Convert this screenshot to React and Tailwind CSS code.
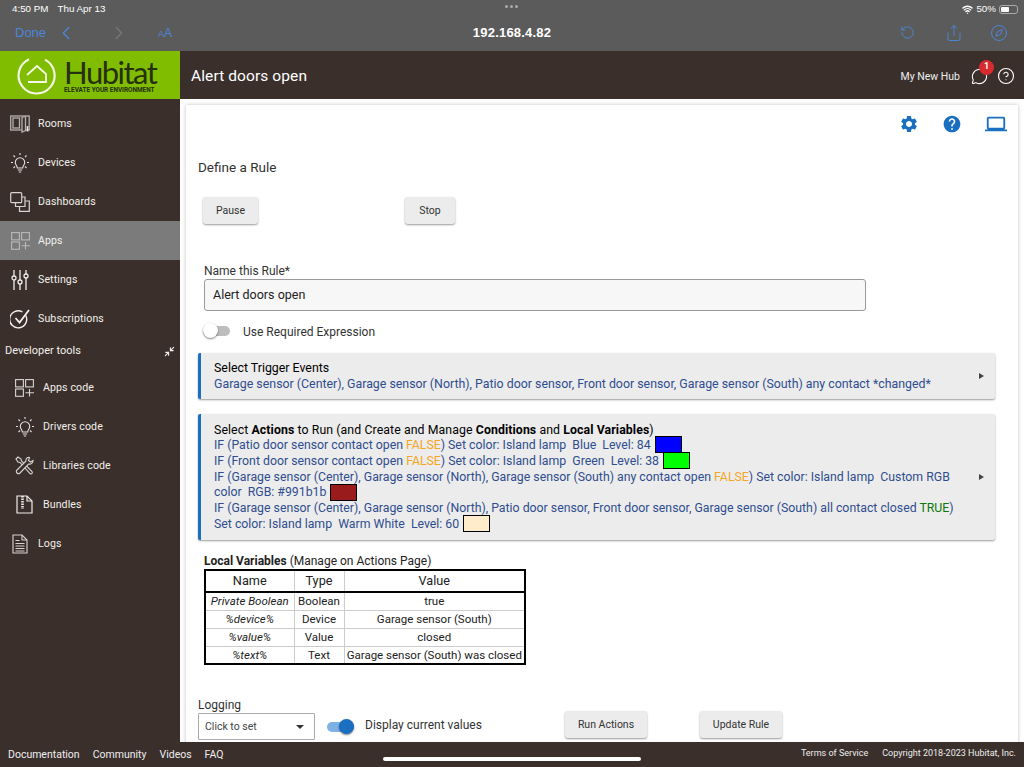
import React from 'react';
import { ChevronLeft, ChevronRight, RotateCw, Share, Compass, Wifi, MessageCircle, CircleHelp, Minimize2 } from 'lucide-react';
import { MdSettings, MdHelp, MdLaptop } from 'react-icons/md';

const font = { fontFamily: 'Roboto, sans-serif' };

// sidebar icons, drawn by hand because the packages have no close match
const RoomsIcon = () => (
  <svg width="20" height="18" viewBox="0 0 20 18" fill="none" stroke="#b5b0ac" strokeWidth="1.3">
    <rect x="0.7" y="1" width="18.500" height="14" />
    <rect x="3" y="3" width="6.500" height="10" />
    <path d="M12 2.500l3.500-1v14l-3.500 1.500z" fill="#3a2f2b" />
    <path d="M17.500 11v5.500" strokeWidth="1.600" stroke="#e8e4e0" />
  </svg>
);
const BulbIcon = () => (
  <svg width="18" height="20" viewBox="0 0 18 20" fill="none" stroke="#e4e0dc" strokeWidth="1.1">
    <path d="M6.3 15c0-2-2-3-2-5.500a4.700 4.700 0 0 1 9.400 0c0 2.500-2 3.500-2 5.500z" />
    <path d="M6.800 17h4.400M7.800 19h2.400" />
    <path d="M9 0v2M2.500 2.500l1.500 1.500M15.500 2.500L14 4M0 9.500h2M16 9.500h2M2.500 15l1.500-1.500M15.500 15L14 13.500" />
  </svg>
);
const DashIcon = () => (
  <svg width="20" height="20" viewBox="0 0 20 20" fill="none" stroke="#d8d4d0" strokeWidth="1.2">
    <rect x="0.7" y="0.7" width="11" height="10" rx="1" />
    <path d="M11.700 5H15v9.500H5.500V10.700" />
    <path d="M15 9h4.300v10.300H9.500V14.500" />
  </svg>
);
const AppsIcon = ({ c = '#d8d4d0' }) => (
  <svg width="19" height="18" viewBox="0 0 19 18" fill="none" stroke={c} strokeWidth="1.1">
    <rect x="0.6" y="0.6" width="7.800" height="7.300" />
    <rect x="10.600" y="0.6" width="7.800" height="7.300" />
    <rect x="0.6" y="10" width="7.800" height="7.300" />
    <path d="M14.500 10v7.500M10.500 13.700H19" />
  </svg>
);
const SlidersIcon = () => (
  <svg width="18" height="20" viewBox="0 0 18 20" fill="none" stroke="#f0ede9" strokeWidth="1.3">
    <path d="M3 0v6M3 10v10M9 0v10M9 14v6M15 0v4M15 8v12" />
    <circle cx="3" cy="8" r="2" />
    <circle cx="9" cy="12" r="2" />
    <circle cx="15" cy="6" r="2" />
  </svg>
);
const CheckIcon = () => (
  <svg width="20" height="20" viewBox="0 0 20 20" fill="none" stroke="#f4f1ee" strokeWidth="1.400">
    <path d="M15.500 6a8.500 8.500 0 1 1-3-3" />
    <path d="M5.500 9l4 4.500L19 1" strokeWidth="1.800" />
  </svg>
);
const WrenchIcon = () => (
  <svg width="19" height="19" viewBox="0 0 19 19" fill="none" stroke="#d8d4d0" strokeWidth="1.100">
    <path d="M1 3l2-2 3 2 .5 2L17 15.500c1 2-.5 3-2 2L5 6.500 3 6z" />
    <path d="M18 4.500l-2.500 1.500-2-1.500 1-3c-2-.5-4 1-3.500 3.500L2 14c-2 2 1 5 3 3l8.500-9c2.500 .5 4.500-1 4.500-3.500z" fill="#3a2f2b" />
  </svg>
);
const ZipIcon = () => (
  <svg width="17" height="19" viewBox="0 0 17 19" fill="none" stroke="#f0ede9" strokeWidth="1.200">
    <path d="M1 1h10l5 5v12H1z" />
    <path d="M6.500 1v13" strokeWidth="2.600" strokeDasharray="1.500 1" />
    <path d="M11 1v5h5" />
  </svg>
);
const LogIcon = () => (
  <svg width="16" height="20" viewBox="0 0 16 20" fill="none" stroke="#d8d4d0" strokeWidth="1.100">
    <path d="M1 1h9l5 5v13H1z" />
    <path d="M10 1v5h5M3.500 6.500h4M3.500 9.500h9M3.500 12h9M3.500 14.500h9M3.500 17h9" />
  </svg>
);

const NavRow = ({ icon, label, active, indent }) => (
  <div className={`flex items-center h-[39px] text-[10.600px] tracking-[0.1px] text-[#f2efec] ${active ? 'bg-[#7b7b7b]' : ''}`}>
    <div className={`flex justify-center shrink-0 ${indent ? 'w-[43px] pl-[6px]' : 'w-[38px] pl-[2px]'}`}>{icon}</div>
    <span>{label}</span>
  </div>
);

const Logo = () => (
  <div className="w-[180px] h-[48px] shrink-0 bg-[#80bc00] flex items-center pl-[16px] pt-[1px]">
    <svg width="41" height="39" viewBox="0 0 41 39" fill="none" stroke="#f4f7e6" strokeWidth="2.200" className="shrink-0">
      <path d="M13 3.200a18 18 0 1 0 16 .4" />
      <path d="M33 6.500a18 18 0 0 1 4 5" strokeWidth="1" />
      <path d="M11 19l10-9 9 8v8H12" strokeWidth="1.800" />
    </svg>
    <div className="ml-[7px] flex flex-col">
      <span className="text-[31px] leading-[29px] tracking-[-1.500px] text-[#26300f]" style={{ fontFamily: 'Lato, sans-serif' }}>Hubitat</span>
      <span className="text-[6.400px] leading-[7px] font-bold text-[#26300f] whitespace-nowrap" style={font}>ELEVATE YOUR ENVIRONMENT</span>
    </div>
  </div>
);

const Btn = ({ children, w }) => (
  <div className={`${w} h-[27px] flex items-center justify-center bg-[#ececec] rounded-[3px] text-[10.500px] text-[#333] shadow-[0_1px_2px_rgba(0,0,0,0.4)]`}>
    {children}
  </div>
);

const Swatch = ({ color }) => (
  <span className="inline-block align-middle w-[27px] h-[17px] border border-black ml-[1px] mt-[-2px]" style={{ background: color }} />
);

const Arrow = () => (
  <div className="w-0 h-0 border-y-[3.500px] border-y-transparent border-l-[5px] border-l-[#444] mr-[11px] shrink-0" />
);

const F = () => <span className="text-[#f5a623]">FALSE</span>;

const variables = [
  ['Private Boolean', 'Boolean', 'true'],
  ['%device%', 'Device', 'Garage sensor (South)'],
  ['%value%', 'Value', 'closed'],
  ['%text%', 'Text', 'Garage sensor (South) was closed'],
];

export default function App() {
  return (
    <div className="w-[1024px] h-[767px] overflow-hidden flex flex-col bg-[#3a2f2b]" style={font}>
      {/* browser chrome */}
      <div className="h-[51px] shrink-0 bg-[#5b5b5b] relative" style={{ fontFamily: '"Liberation Sans", sans-serif' }}>
        <div className="flex justify-between items-center h-[19px] pl-[12px] pr-[6px] text-[9.800px] text-white">
          <div className="flex gap-[9px]"><span>4:50 PM</span><span>Thu Apr 13</span></div>
          <div className="flex items-center gap-[3px]">
            <Wifi size={11} strokeWidth={3} />
            <span>50%</span>
            <div className="w-[19px] h-[9px] rounded-[3px] border border-[#aaa] p-[1px]"><div className="w-[8px] h-full rounded-[1px] bg-white" /></div>
          </div>
        </div>
        <div className="absolute left-[505px] top-[5px] flex gap-[2px]">
          <i className="w-[3px] h-[3px] rounded-full bg-[#aaa]" /><i className="w-[3px] h-[3px] rounded-full bg-[#aaa]" /><i className="w-[3px] h-[3px] rounded-full bg-[#aaa]" />
        </div>
        <div className="flex items-center h-[27px] pl-[15px] pr-[16px] text-[#4d86d6]">
          <div className="flex-1 flex items-center">
            <span className="text-[13px] w-[42px]">Done</span>
            <ChevronLeft size={22} strokeWidth={1.500} className="ml-[-2px]" />
            <ChevronRight size={22} strokeWidth={1.500} className="ml-[31px] text-[#777]" />
            <span className="ml-[28px] text-[12px] w-[22px]"><span className="text-[9px]">A</span>A</span>
          </div>
          <span className="text-white font-bold text-[13px] tracking-[0.2px] pl-[1px]">192.168.4.82</span>
          <div className="flex-1 flex items-center justify-end">
            <RotateCw size={15} strokeWidth={1.500} className="scale-x-[-1]" />
            <Share size={18} strokeWidth={1.300} className="ml-[30px]" />
            <Compass size={18} strokeWidth={1.300} className="ml-[27px]" />
          </div>
        </div>
      </div>

      {/* header */}
      <div className="h-[48px] shrink-0 flex items-center bg-[#3a2f2b] text-white">
        <Logo />
        <div className="pl-[11px] mt-[3px] text-[15.500px] tracking-[0.1px]">Alert doors open</div>
        <div className="ml-auto flex items-center pr-[9px] mt-[2px]">
          <span className="text-[10.500px] text-[#eee] mt-[1px]">My New Hub</span>
          <div className="relative ml-[11px]">
            <MessageCircle size={17} strokeWidth={1.500} />
            <span className="absolute top-[-8px] right-[-6px] w-[15px] h-[15px] rounded-full bg-[#d92b2f] text-[9px] font-bold flex items-center justify-center">1</span>
          </div>
          <CircleHelp size={18} strokeWidth={1.500} className="ml-[9px]" />
        </div>
      </div>

      <div className="flex flex-1 min-h-0">
        {/* sidebar */}
        <div className="w-[180px] shrink-0 pt-[5px]">
          <NavRow icon={<RoomsIcon />} label="Rooms" />
          <NavRow icon={<BulbIcon />} label="Devices" />
          <NavRow icon={<DashIcon />} label="Dashboards" />
          <NavRow icon={<AppsIcon c="#b9b9b9" />} label="Apps" active />
          <NavRow icon={<SlidersIcon />} label="Settings" />
          <NavRow icon={<CheckIcon />} label="Subscriptions" />
          <div className="flex items-center justify-between h-[25px] pt-[1px] pl-[5px] pr-[5px] text-[11px] text-[#f2efec]">
            <span>Developer tools</span>
            <Minimize2 size={11} strokeWidth={2.500} />
          </div>
          <div className="h-[5px]" />
          <NavRow icon={<AppsIcon />} label="Apps code" indent />
          <NavRow icon={<BulbIcon />} label="Drivers code" indent />
          <NavRow icon={<WrenchIcon />} label="Libraries code" indent />
          <NavRow icon={<ZipIcon />} label="Bundles" indent />
          <NavRow icon={<LogIcon />} label="Logs" />
        </div>

        {/* content */}
        <div className="flex-1 min-w-0 bg-white overflow-hidden pl-[6px] pr-[6px] pt-[6px]">
          <div className="h-[700px] shadow-[0_0_4px_rgba(0,0,0,0.25)] pl-[12px] pr-[23px]">
            <div className="flex justify-end items-start gap-[23px] pt-[9px] mr-[-12px] h-[46px] text-[#1a6fc0]">
              <MdSettings size={20} />
              <MdHelp size={20} />
              <MdLaptop size={22} className="mt-[-1px]" />
            </div>
            <div className="text-[13.500px] text-[#333] leading-[16px] mt-[8px]">Define a Rule</div>
            <div className="flex mt-[22px] ml-[5px]">
              <Btn w="w-[55px]">Pause</Btn>
              <div className="ml-[147px]"><Btn w="w-[50px]">Stop</Btn></div>
            </div>
            <div className="ml-[6px] mt-[39px] text-[12px] leading-[16px] text-[#333]">Name this Rule*</div>
            <div className="ml-[6px] w-[662px] h-[32px] flex items-center pl-[8px] pt-[1px] border border-[#999] rounded-[3px] bg-[#f7f7f7] text-[12.500px] text-[#222]">Alert doors open</div>
            <div className="ml-[5px] mt-[10px] flex items-center h-[20px]">
              <div className="relative w-[27px] h-[10px] rounded-full bg-[#bdbdbd]">
                <div className="absolute left-0 top-[-3px] w-[15px] h-[15px] rounded-full bg-white shadow-[0_1px_2px_rgba(0,0,0,0.5)]" />
              </div>
              <span className="ml-[13px] mt-[1px] text-[12px] text-[#333]">Use Required Expression</span>
            </div>
            <div className="mt-[12px] h-[46px] flex items-center justify-between bg-[#ececec] border-l-[3px] border-l-[#1a6fc0] rounded-[2px] shadow-[0_1px_2px_rgba(0,0,0,0.4)] pl-[13px]">
              <div className="text-[12.360px] leading-[15.700px] pt-[2px]">
                <div className="text-black">Select Trigger Events</div>
                <div className="text-[#2f4d8f]">Garage sensor (Center), Garage sensor (North), Patio door sensor, Front door sensor, Garage sensor (South) any contact *changed*</div>
              </div>
              <Arrow />
            </div>
            <div className="mt-[15px] h-[126px] flex items-center justify-between bg-[#ececec] border-l-[3px] border-l-[#1a6fc0] rounded-[2px] shadow-[0_1px_2px_rgba(0,0,0,0.4)] pl-[13px]">
              <div className="text-[12.300px] leading-[15.700px] w-[750px] pt-[1px] text-[#2f4d8f]">
                <div className="text-black tracking-[0.09px]">Select <b>Actions</b> to Run (and Create and Manage <b>Conditions</b> and <b>Local Variables</b>)</div>
                <div>IF (Patio door sensor contact open <F />) Set color: Island lamp&nbsp; Blue&nbsp; Level: 84 <Swatch color="#0000ff" /></div>
                <div>IF (Front door sensor contact open <F />) Set color: Island lamp&nbsp; Green&nbsp; Level: 38 <Swatch color="#00ff00" /></div>
                <div>IF (Garage sensor (Center), Garage sensor (North), Garage sensor (South) any contact open <F />) Set color: Island lamp&nbsp; Custom RGB color&nbsp; RGB: #991b1b <Swatch color="#991b1b" /></div>
                <div>IF (Garage sensor (Center), Garage sensor (North), Patio door sensor, Front door sensor, Garage sensor (South) all contact closed <span className="text-[#0a7a0a]">TRUE</span>) Set color: Island lamp&nbsp; Warm White&nbsp; Level: 60 <Swatch color="#ffeccb" /></div>
              </div>
              <Arrow />
            </div>
            <div className="ml-[6px] mt-[14px] text-[12px] leading-[15px] text-[#222]"><b>Local Variables</b> (Manage on Actions Page)</div>
            <table className="ml-[6px] w-[322px] border-2 border-black text-center text-[#222] border-collapse">
              <thead>
                <tr className="h-[22px] text-[12.700px] border-b-2 border-black">
                  <th className="font-normal w-[89px] border-r border-[#ccc]">Name</th>
                  <th className="font-normal w-[50px] border-r border-[#ccc]">Type</th>
                  <th className="font-normal">Value</th>
                </tr>
              </thead>
              <tbody className="text-[11.500px] leading-[16px]">
                {variables.map((row) => (
                  <tr key={row[0]} className="h-[18px] border-t border-[#ccc]">
                    <td className="italic border-r border-[#ccc] p-0 whitespace-nowrap">{row[0]}</td>
                    <td className="border-r border-[#ccc] p-0">{row[1]}</td>
                    <td className="p-0 whitespace-nowrap">{row[2]}</td>
                  </tr>
                ))}
              </tbody>
            </table>
            <div className="mt-[32px] text-[12px] leading-[16px] text-[#333]">Logging</div>
            <div className="flex items-center">
              <div className="w-[117px] h-[27px] flex items-center justify-between border border-[#aaa] rounded-[1px] pl-[6px] pr-[10px] text-[10.500px] text-[#444]">
                Click to set
                <span className="w-0 h-0 border-x-[4px] border-x-transparent border-t-[4px] border-t-[#333]" />
              </div>
              <div className="relative ml-[12px] w-[27px] h-[10px] rounded-full bg-[#7fb0e6]">
                <div className="absolute right-0 top-[-3px] w-[15px] h-[15px] rounded-full bg-[#1a6fc0] shadow-[0_1px_2px_rgba(0,0,0,0.5)]" />
              </div>
              <span className="ml-[11px] text-[12px] text-[#333] w-[200px] mt-[-3px]">Display current values</span>
              <div className="mt-[-4px]"><Btn w="w-[82px]">Run Actions</Btn></div>
              <div className="ml-[53px] mt-[-4px]"><Btn w="w-[82px]">Update Rule</Btn></div>
            </div>
          </div>
        </div>
      </div>

      {/* footer */}
      <div className="h-[25px] shrink-0 relative flex items-center justify-between pl-[8px] pr-[8px] bg-[#3a2f2b] text-[#eee]">
        <div className="flex gap-[13px] text-[10.500px]">
          <span>Documentation</span><span>Community</span><span>Videos</span><span>FAQ</span>
        </div>
        <div className="flex gap-[14px] text-[9px] mt-[-1px]">
          <span>Terms of Service</span><span>Copyright 2018-2023 Hubitat, Inc.</span>
        </div>
        <div className="absolute left-[383px] top-[15px] w-[258px] h-[4px] rounded-full bg-white" />
      </div>
    </div>
  );
}
